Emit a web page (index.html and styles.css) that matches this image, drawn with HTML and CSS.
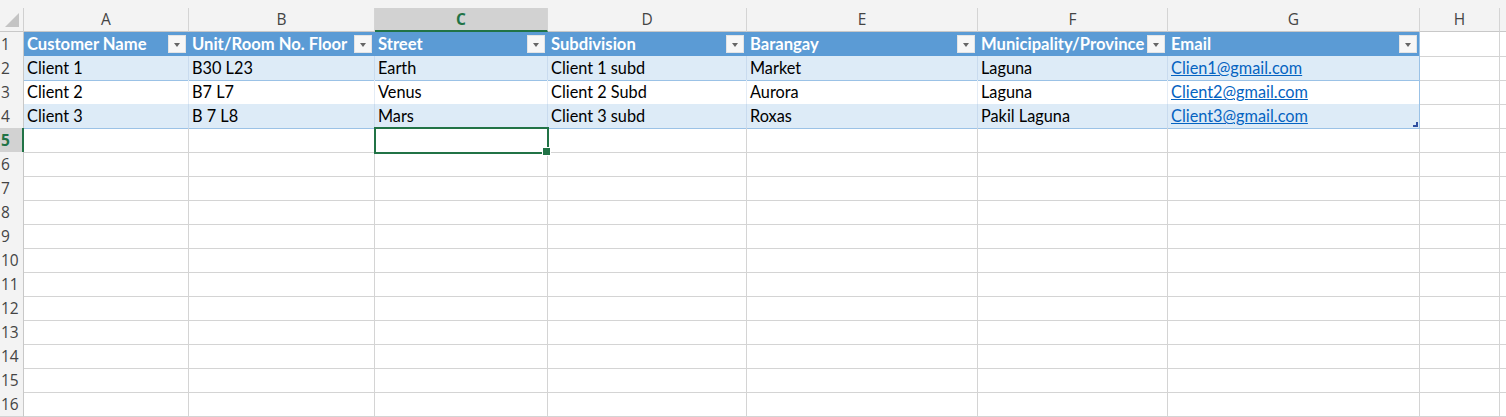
FILE: index.html
```html
<!DOCTYPE html>
<html lang="en">
<head>
<meta charset="utf-8">
<title>Sheet</title>
<link rel="stylesheet" href="styles.css">
</head>
<body>
<div class="sheet">
  <div class="band"></div>
  <div class="row colhead">
    <div class="corner"><svg width="16" height="16" viewBox="0 0 16 16"><polygon points="15,1 15,15 1,15" fill="#c4c4c4"/></svg></div>
    <div class="ch">A</div><div class="ch">B</div><div class="ch active">C</div><div class="ch">D</div><div class="ch">E</div><div class="ch">F</div><div class="ch">G</div><div class="ch">H</div><div class="ch last"></div>
  </div>

  <div class="row">
    <div class="rh">1</div>
    <div class="c th"><span class="t">Customer Name</span><span class="fb"></span></div>
    <div class="c th"><span class="t">Unit/Room No. Floor</span><span class="fb"></span></div>
    <div class="c th"><span class="t">Street</span><span class="fb"></span></div>
    <div class="c th"><span class="t">Subdivision</span><span class="fb"></span></div>
    <div class="c th"><span class="t">Barangay</span><span class="fb"></span></div>
    <div class="c th"><span class="t">Municipality/Province</span><span class="fb"></span></div>
    <div class="c th tend"><span class="t">Email</span><span class="fb"></span></div>
    <div class="c"></div><div class="c last"></div>
  </div>

  <div class="row">
    <div class="rh">2</div>
    <div class="c td band1">Client 1</div>
    <div class="c td band1">B30 L23</div>
    <div class="c td band1">Earth</div>
    <div class="c td band1">Client 1 subd</div>
    <div class="c td band1">Market</div>
    <div class="c td band1">Laguna</div>
    <div class="c td band1 tend"><span class="link">Clien1@gmail.com</span></div>
    <div class="c"></div><div class="c last"></div>
  </div>

  <div class="row">
    <div class="rh">3</div>
    <div class="c td">Client 2</div>
    <div class="c td">B7 L7</div>
    <div class="c td">Venus</div>
    <div class="c td">Client 2 Subd</div>
    <div class="c td">Aurora</div>
    <div class="c td">Laguna</div>
    <div class="c td tend"><span class="link">Client2@gmail.com</span></div>
    <div class="c"></div><div class="c last"></div>
  </div>

  <div class="row">
    <div class="rh">4</div>
    <div class="c td band1">Client 3</div>
    <div class="c td band1">B 7 L8</div>
    <div class="c td band1">Mars</div>
    <div class="c td band1">Client 3 subd</div>
    <div class="c td band1">Roxas</div>
    <div class="c td band1">Pakil Laguna</div>
    <div class="c td band1 tend resize"><span class="link">Client3@gmail.com</span></div>
    <div class="c"></div><div class="c last"></div>
  </div>

  <div class="row">
    <div class="rh active">5</div>
    <div class="c"></div><div class="c"></div><div class="c sel"></div><div class="c"></div><div class="c"></div><div class="c"></div><div class="c"></div><div class="c"></div><div class="c last"></div>
  </div>
  <div class="row"><div class="rh">6</div><div class="c"></div><div class="c"></div><div class="c"></div><div class="c"></div><div class="c"></div><div class="c"></div><div class="c"></div><div class="c"></div><div class="c last"></div></div>
  <div class="row"><div class="rh">7</div><div class="c"></div><div class="c"></div><div class="c"></div><div class="c"></div><div class="c"></div><div class="c"></div><div class="c"></div><div class="c"></div><div class="c last"></div></div>
  <div class="row"><div class="rh">8</div><div class="c"></div><div class="c"></div><div class="c"></div><div class="c"></div><div class="c"></div><div class="c"></div><div class="c"></div><div class="c"></div><div class="c last"></div></div>
  <div class="row"><div class="rh">9</div><div class="c"></div><div class="c"></div><div class="c"></div><div class="c"></div><div class="c"></div><div class="c"></div><div class="c"></div><div class="c"></div><div class="c last"></div></div>
  <div class="row"><div class="rh">10</div><div class="c"></div><div class="c"></div><div class="c"></div><div class="c"></div><div class="c"></div><div class="c"></div><div class="c"></div><div class="c"></div><div class="c last"></div></div>
  <div class="row"><div class="rh">11</div><div class="c"></div><div class="c"></div><div class="c"></div><div class="c"></div><div class="c"></div><div class="c"></div><div class="c"></div><div class="c"></div><div class="c last"></div></div>
  <div class="row"><div class="rh">12</div><div class="c"></div><div class="c"></div><div class="c"></div><div class="c"></div><div class="c"></div><div class="c"></div><div class="c"></div><div class="c"></div><div class="c last"></div></div>
  <div class="row"><div class="rh">13</div><div class="c"></div><div class="c"></div><div class="c"></div><div class="c"></div><div class="c"></div><div class="c"></div><div class="c"></div><div class="c"></div><div class="c last"></div></div>
  <div class="row"><div class="rh">14</div><div class="c"></div><div class="c"></div><div class="c"></div><div class="c"></div><div class="c"></div><div class="c"></div><div class="c"></div><div class="c"></div><div class="c last"></div></div>
  <div class="row"><div class="rh">15</div><div class="c"></div><div class="c"></div><div class="c"></div><div class="c"></div><div class="c"></div><div class="c"></div><div class="c"></div><div class="c"></div><div class="c last"></div></div>
  <div class="row"><div class="rh">16</div><div class="c"></div><div class="c"></div><div class="c"></div><div class="c"></div><div class="c"></div><div class="c"></div><div class="c"></div><div class="c"></div><div class="c last"></div></div>
</div>
</body>
</html>
```
FILE: styles.css
```css
* { box-sizing: border-box; }
html, body { margin: 0; padding: 0; background: #ffffff; overflow: hidden; }
body { width: 1506px; height: 417px; }

.sheet {
  --cols: 24px 165px 186px 173px 199px 231px 190px 252px 80px 1fr;
  font-family: Lato, "Open Sans", sans-serif;
  font-size: 16.3px;
  color: #000;
}

.band { height: 8px; background: #f3f3f3; }

.row {
  display: grid;
  grid-template-columns: var(--cols);
  height: 24px;
}

.colhead { background: #f3f3f3; }

.corner {
  border-right: 1px solid #d0d0d0;
  border-bottom: 1px solid #c8c8c8;
  display: flex;
  align-items: flex-end;
  justify-content: flex-end;
  padding: 0 3px 3px 0;
}

.ch {
  font-family: "Open Sans", "Noto Sans", sans-serif;
  font-size: 15.5px;
  color: #444;
  text-align: center;
  line-height: 23px;
  border-right: 1px solid #d4d4d4;
  border-bottom: 1px solid #c8c8c8;
}
.ch.active {
  background: #d2d2d2;
  color: #217346;
  font-weight: 700;
  border-bottom: 2px solid #217346;
  line-height: 22px;
}
.ch.last { border-right: none; }

.rh {
  font-family: "Open Sans", "Noto Sans", sans-serif;
  font-size: 15.5px;
  color: #444;
  background: #f3f3f3;
  border-right: 1px solid #c8c8c8;
  border-bottom: 1px solid #d4d4d4;
  line-height: 24px;
  padding-left: 1px;
}
.rh.active {
  background: #d2d2d2;
  color: #217346;
  font-weight: 700;
  border-right: 2px solid #217346;
}

.c {
  border-right: 1px solid #d4d4d4;
  border-bottom: 1px solid #d4d4d4;
  white-space: nowrap;
  overflow: hidden;
  line-height: 24px;
  padding-left: 3px;
}
.c.last { border-right: none; }

.th {
  background: #5b9bd5;
  color: #fff;
  font-weight: 700;
  font-size: 16.6px;
  border-right-color: #5b9bd5;
  border-bottom-color: #5b9bd5;
  display: flex;
  align-items: center;
  padding-right: 2px;
}
.th .t { flex: 1 1 auto; min-width: 0; overflow: hidden; white-space: nowrap; }
.fb {
  flex: none;
  width: 18px;
  height: 18px;
  background: #f7f7f7;
  border: 1px solid #e4e4e4;
  position: relative;
}
.fb::after {
  content: "";
  position: absolute;
  left: 5px;
  top: 7px;
  border-left: 3.5px solid transparent;
  border-right: 3.5px solid transparent;
  border-top: 4px solid #666;
}

.td {
  border-bottom-color: #9bc2e6;
  border-right-color: #e4ecf5;
}
.band1 { background: #ddebf7; border-right-color: #c9dbee; }
.tend { border-right-color: #9bc2e6; }

.link { color: #0563c1; text-decoration: underline; }

.resize { position: relative; }
.resize::after {
  content: "";
  position: absolute;
  right: 1px;
  bottom: 1px;
  width: 5px;
  height: 5px;
  background: linear-gradient(#ddebf7, #ddebf7) left top / 3px 3px no-repeat, #2f4fa0;
}

.sel {
  position: relative;
  overflow: visible;
  outline: 2px solid #217346;
  outline-offset: -1px;
  z-index: 2;
}
.sel::after {
  content: "";
  position: absolute;
  right: -4px;
  bottom: -4px;
  width: 7px;
  height: 7px;
  background: #217346;
  border: 1px solid #fff;
}
```
